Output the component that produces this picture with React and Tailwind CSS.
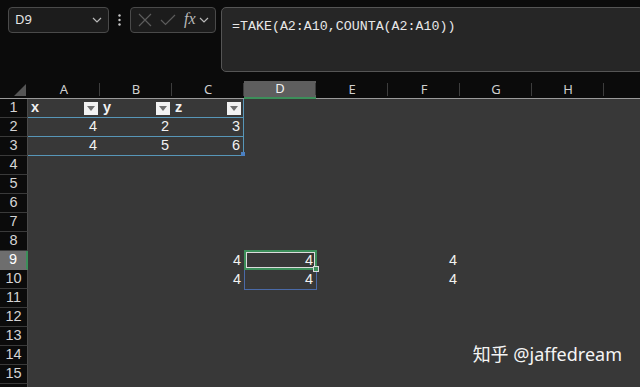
import React from 'react';

const COLS = ['A', 'B', 'C', 'D', 'E', 'F', 'G', 'H', 'I'];
const ROWS = Array.from({ length: 16 }, (_, i) => i + 1);

// values keyed by "row-col"
const values = {
  '2-A': '4', '2-B': '2', '2-C': '3',
  '3-A': '4', '3-B': '5', '3-C': '6',
  '9-C': '4', '9-D': '4', '9-F': '4',
  '10-C': '4', '10-D': '4', '10-F': '4',
};
const headers = { A: 'x', B: 'y', C: 'z' };
const tableCols = ['A', 'B', 'C'];

const Chevron = ({ className }) => (
  <svg width="10" height="6" viewBox="0 0 10 6" className={className}>
    <path d="M1 1l4 4 4-4" fill="none" stroke="#b8b8b8" strokeWidth="1.2" />
  </svg>
);

const FilterButton = () => (
  <div className="w-[14px] h-[13px] bg-[#f2f2f2] flex items-center justify-center mr-[2px]">
    <svg width="8" height="5" viewBox="0 0 8 5">
      <path d="M0 0h8L4 5z" fill="#707070" />
    </svg>
  </div>
);

const FormulaBar = () => (
  <div className="h-[81px] bg-[#0b0b0b] flex items-start pt-[7px] pl-[8px] gap-0">
    <div className="w-[101px] h-[26px] rounded-[4px] border border-[#4a4a4a] bg-[#1c1c1c] flex items-center justify-between px-[6px]">
      <span className="text-[13px] text-[#e6e6e6]" style={{ fontFamily: '"Noto Sans", sans-serif' }}>D9</span>
      <Chevron />
    </div>
    <div className="w-[21px] h-[26px] flex items-center justify-center">
      <svg width="3" height="12" viewBox="0 0 3 12">
        <circle cx="1.5" cy="1.5" r="1.2" fill="#c8c8c8" />
        <circle cx="1.5" cy="6" r="1.2" fill="#c8c8c8" />
        <circle cx="1.5" cy="10.5" r="1.2" fill="#c8c8c8" />
      </svg>
    </div>
    <div className="w-[86px] h-[26px] rounded-[4px] border border-[#4a4a4a] bg-[#1c1c1c] flex items-center pl-[7px] gap-[8px]">
      <svg width="14" height="14" viewBox="0 0 14 14">
        <path d="M1 1l12 12M13 1L1 13" stroke="#5c5c5c" strokeWidth="1.2" />
      </svg>
      <svg width="16" height="12" viewBox="0 0 16 12">
        <path d="M1 6l4.5 4.5L15 1" fill="none" stroke="#5c5c5c" strokeWidth="1.2" />
      </svg>
      <span className="text-[16px] italic text-[#b8b8b8] leading-none -mt-[2px]" style={{ fontFamily: '"Liberation Serif", serif' }}>fx</span>
      <Chevron className="-ml-[5px]" />
    </div>
    <div className="ml-[5px] flex-1 -mr-[4px] h-[65px] rounded-[5px] border border-[#555] bg-[#262626] pl-[10px] pt-[5px]">
      <span className="text-[13.3px] text-[#e8e8e8]" style={{ fontFamily: '"Liberation Mono", monospace' }}>
        =TAKE(A2:A10,COUNTA(A2:A10))
      </span>
    </div>
  </div>
);

const ColumnHeaders = () => (
  <div className="flex h-[18px] bg-[#0b0b0b]">
    <div className="w-[28px] shrink-0 flex items-end justify-end pr-[2px] pb-[2px] border-b border-[#9a9a9a]">
      <svg width="12" height="12" viewBox="0 0 12 12">
        <path d="M12 0v12H0z" fill="#555" />
      </svg>
    </div>
    {COLS.map((c) => (
      <div
        key={c}
        className={`w-[72px] shrink-0 flex items-center justify-center text-[13px] relative ${
          c === 'D'
            ? 'bg-[#5e5e5e] text-[#f0f0f0] border-b-2 border-[#3c8f5a]'
            : 'text-[#cfcfcf] border-b border-[#9a9a9a]'
        }`}
        style={{ fontFamily: '"Noto Sans", sans-serif' }}
      >
        {c === 'I' ? '' : c}
        <div className="absolute right-0 top-[2px] bottom-[2px] w-px bg-[#3d3d3d]" />
      </div>
    ))}
  </div>
);

const Cell = ({ row, col }) => {
  const inTable = row <= 3 && tableCols.includes(col);
  const key = `${row}-${col}`;
  let cls = 'w-[72px] shrink-0 h-[19px] flex items-center text-[14.5px] text-[#f2f2f2]';
  if (inTable) {
    cls += ' border-b border-[#5796b8]';
    if (col === 'C') cls += ' border-r border-r-[#5796b8]';
  }
  if (row === 1 && headers[col]) {
    return (
      <div className={`${cls} justify-between pl-[3px] font-bold`}>
        <span>{headers[col]}</span>
        <FilterButton />
      </div>
    );
  }
  return <div className={`${cls} justify-end pr-[3px]`}>{values[key] || ''}</div>;
};

export default function App() {
  return (
    <div
      className="w-[640px] h-[387px] overflow-hidden bg-[#383838] relative"
      style={{ fontFamily: '"Liberation Sans", Arial, sans-serif' }}
    >
      <FormulaBar />
      <ColumnHeaders />
      <div className="relative">
        {ROWS.map((r) => (
          <div key={r} className="flex h-[19px]">
            <div
              className={`w-[28px] shrink-0 h-[19px] flex items-center justify-center text-[14.5px] border-b ${
                r === 9
                  ? 'bg-[#6e6e6e] text-white border-[#6e6e6e] border-r-2 border-r-[#3c8f5a]'
                  : 'bg-[#0b0b0b] text-[#d4d4d4] border-[#3a3a3a] border-r border-r-[#4a4a4a]'
              }`}
            >
              {r < 16 ? r : ''}
            </div>
            {COLS.map((c) => (
              <Cell key={c} row={r} col={c} />
            ))}
          </div>
        ))}

        {/* table resize handle */}
        <div className="absolute left-[241px] top-[53px] w-[4px] h-[4px] bg-[#4a7fc1]" />

        {/* spill range D9:D10 */}
        <div className="absolute left-[244px] top-[152px] w-[73px] h-[39px] border border-[#4a6aa8]" />
        {/* active cell D9 */}
        <div className="absolute left-[244px] top-[151px] w-[73px] h-[20px] border-2 border-[#3c8f5a]">
          <div className="absolute inset-0 border border-[#dcdcdc]" />
        </div>
        <div className="absolute left-[313px] top-[167px] w-[6px] h-[6px] bg-[#3c8f5a] border border-[#dcdcdc]" />
      </div>

      <div
        className="absolute right-[18px] bottom-[19px] text-[18px] text-[#f4f4f4]"
        style={{ fontFamily: '"Noto Sans", "Noto Sans CJK SC", sans-serif' }}
      >
        知乎 @jaffedream
      </div>
    </div>
  );
}
